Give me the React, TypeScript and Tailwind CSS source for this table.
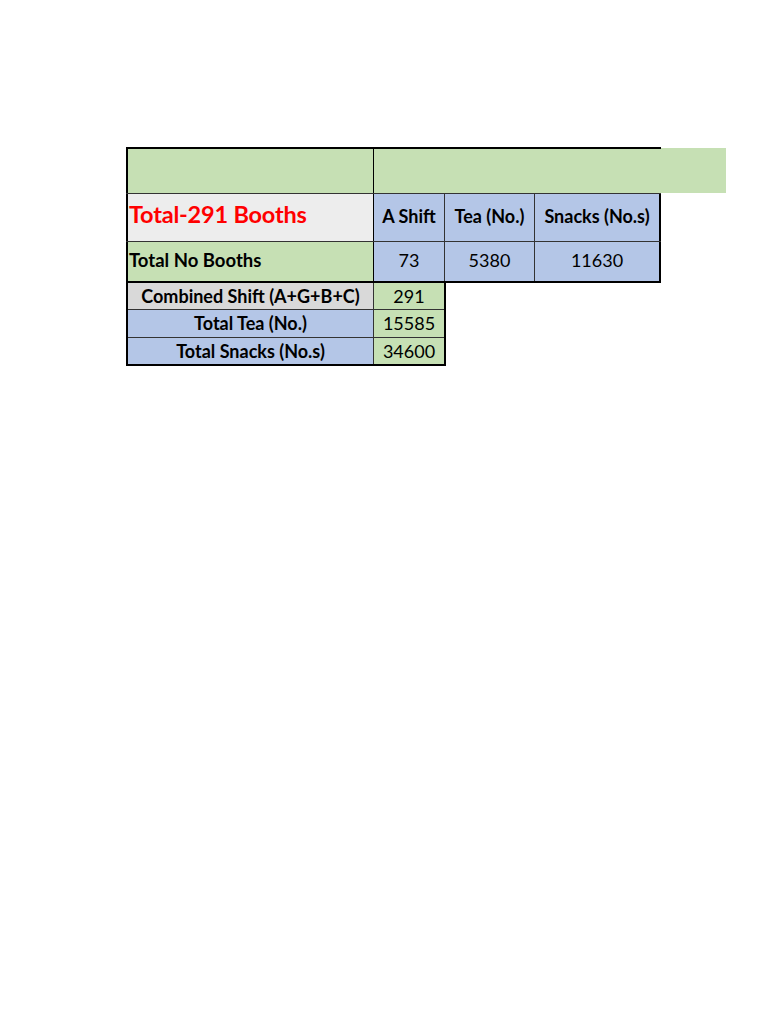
import React from "react";

const font = { fontFamily: "Lato, 'Open Sans', sans-serif" };

export default function App() {
  return (
    <div className="min-h-screen w-full bg-white" style={font}>
      <div className="pt-[147px] pl-[126px]">
        {/* row 1: empty green band */}
        <div className="flex w-fit h-[46px]">
          <div className="w-[248px] bg-[#c6e0b4] border-l-2 border-t-2 border-r border-black" />
          <div className="w-[287px] bg-[#c6e0b4] border-t-2 border-black" />
          <div className="w-[65px] bg-[#c6e0b4] mt-px" />
        </div>

        {/* row 2: title + headers */}
        <div className="flex w-fit h-[48px] border-t border-[#333]">
          <div className="w-[248px] bg-[#ededed] border-l-2 border-r border-black flex items-center pl-[1px] pb-[5px]">
            <span className="text-[#ff0000] text-[23.5px] font-bold tracking-[-0.2px]">Total-291 Booths</span>
          </div>
          <div className="w-[71px] bg-[#b4c6e7] border-r border-[#333] flex items-center justify-center pb-[3px] text-[18px] font-bold text-black">
            A Shift
          </div>
          <div className="w-[90px] bg-[#b4c6e7] border-r border-[#333] flex items-center justify-center pb-[3px] text-[18px] font-bold text-black">
            Tea (No.)
          </div>
          <div className="w-[126px] bg-[#b4c6e7] border-r-2 border-black flex items-center justify-center pb-[3px] text-[18px] font-bold text-black">
            Snacks (No.s)
          </div>
        </div>

        {/* row 3: total no booths */}
        <div className="flex w-fit h-[42px] border-t border-[#333] border-b-2 border-b-black">
          <div className="w-[248px] bg-[#c6e0b4] border-l-2 border-r border-black flex items-center pl-[1px] pb-[2px] text-[18.5px] font-bold text-black">
            Total No Booths
          </div>
          <div className="w-[71px] bg-[#b4c6e7] border-r border-[#333] flex items-center justify-center pb-[2px] text-[18px] text-black">
            73
          </div>
          <div className="w-[90px] bg-[#b4c6e7] border-r border-[#333] flex items-center justify-center pb-[2px] text-[18px] text-black">
            5380
          </div>
          <div className="w-[126px] bg-[#b4c6e7] border-r-2 border-black flex items-center justify-center pb-[2px] text-[18px] text-black">
            11630
          </div>
        </div>

        {/* rows 4-6: summary block */}
        <div className="w-[320px] border-l-2 border-r-2 border-b-2 border-black">
          <div className="flex h-[27px] border-b border-[#333]">
            <div className="w-[246px] bg-[#d9d9d9] border-r border-[#333] flex items-center justify-center text-[18px] font-bold text-black">
              Combined Shift (A+G+B+C)
            </div>
            <div className="flex-1 bg-[#c6e0b4] flex items-center justify-center text-[18px] text-black">291</div>
          </div>
          <div className="flex h-[28px] border-b border-[#333]">
            <div className="w-[246px] bg-[#b4c6e7] border-r border-[#333] flex items-center justify-center text-[18px] font-bold text-black">
              Total Tea (No.)
            </div>
            <div className="flex-1 bg-[#c6e0b4] flex items-center justify-center text-[18px] text-black">15585</div>
          </div>
          <div className="flex h-[26px]">
            <div className="w-[246px] bg-[#b4c6e7] border-r border-[#333] flex items-center justify-center text-[18px] font-bold text-black">
              Total Snacks (No.s)
            </div>
            <div className="flex-1 bg-[#c6e0b4] flex items-center justify-center text-[18px] text-black">34600</div>
          </div>
        </div>
      </div>
    </div>
  );
}
